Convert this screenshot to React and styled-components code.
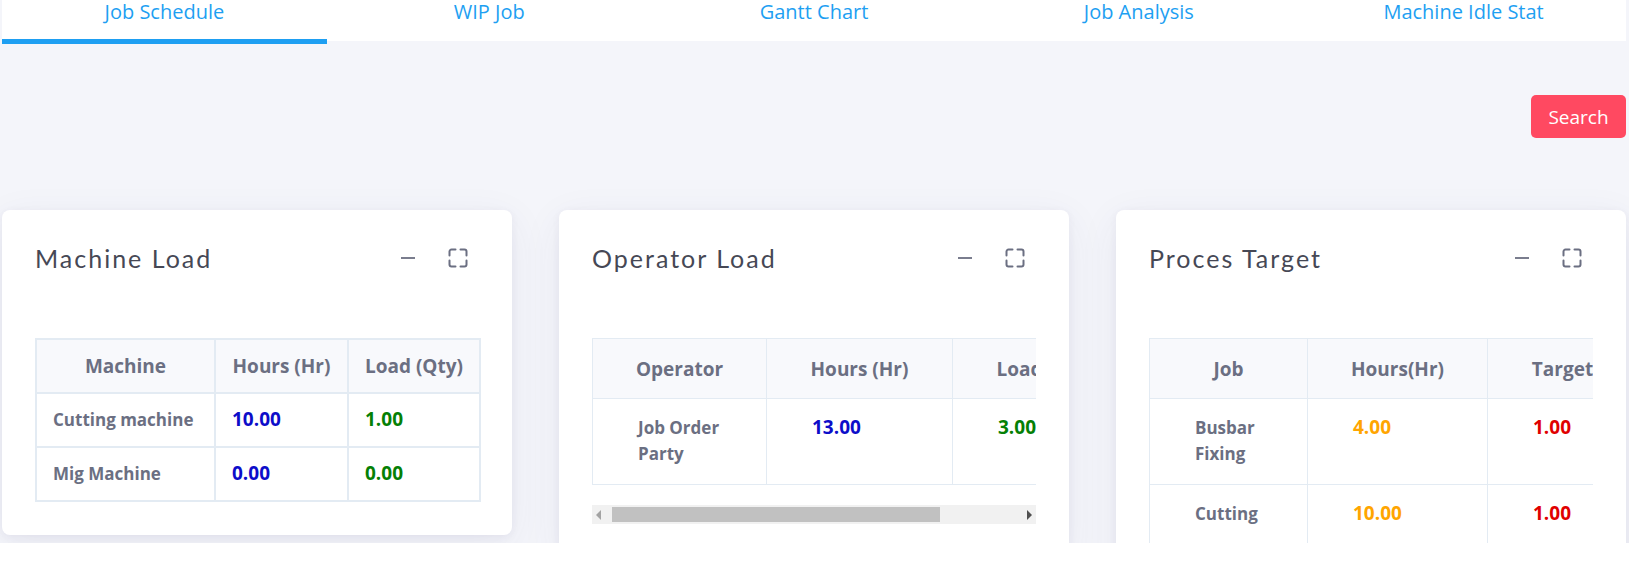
import React from 'react';
import styled, { createGlobalStyle, css } from 'styled-components';

const GlobalStyle = createGlobalStyle`
  html, body {
    margin: 0;
    padding: 0;
    background: #ffffff;
  }
  body {
    font-family: "Open Sans", "Liberation Sans", sans-serif;
    color: #6b6f82;
  }
  * {
    box-sizing: border-box;
  }
`;

const Page = styled.div`
  height: 543px;
  overflow: hidden;
  background: #f4f5fa;
  padding: 0 3px 0 2px;
`;

const TabBar = styled.nav`
  display: flex;
  height: 41px;
  background: #ffffff;
`;

const Tab = styled.div`
  flex: 1;
  position: relative;
  text-align: center;
  font-size: 20px;
  line-height: 24px;
  color: #1e9ff2;
  cursor: pointer;

  ${p =>
    p.$active &&
    css`
      &::after {
        content: '';
        position: absolute;
        left: 0;
        right: 0;
        bottom: -3px;
        height: 5px;
        background: #1e9ff2;
      }
    `}
`;

const Toolbar = styled.div`
  display: flex;
  justify-content: flex-end;
  margin-top: 54px;
`;

const SearchButton = styled.button`
  width: 95px;
  height: 43px;
  border: 0;
  border-radius: 5px;
  background: #ff4961;
  color: #ffffff;
  font-family: "Open Sans", "Liberation Sans", sans-serif;
  font-size: 19px;
  cursor: pointer;
`;

const CardGrid = styled.div`
  display: grid;
  grid-template-columns: repeat(3, minmax(0, 1fr));
  column-gap: 47px;
  margin-top: 72px;
  align-items: start;
`;

const Card = styled.section`
  min-width: 0;
  background: #ffffff;
  border-radius: 8px;
  padding: 33px;
  box-shadow: 0 10px 40px 0 rgba(62, 57, 107, 0.07),
    0 2px 9px 0 rgba(62, 57, 107, 0.06);
`;

const CardHeader = styled.div`
  display: flex;
  align-items: center;
  justify-content: space-between;
  height: 30px;
`;

const CardTitle = styled.h4`
  margin: 0;
  font-family: Lato, "Open Sans", sans-serif;
  font-weight: 400;
  font-size: 25px;
  letter-spacing: 2px;
  color: #464855;
`;

const HeaderActions = styled.div`
  display: flex;
  gap: 26px;
  margin-right: 9px;
`;

const IconButton = styled.span`
  display: flex;
  width: 24px;
  height: 24px;
  color: #6b6f82;
  cursor: pointer;
`;

const CardBody = styled.div`
  margin-top: 65px;
`;

const TableScroll = styled.div`
  overflow: hidden;
`;

const Table = styled.table`
  border-collapse: collapse;
  table-layout: fixed;
  width: ${p => p.$width || '100%'};

  th,
  td {
    border: ${p => (p.$thick ? 2 : 1)}px solid #e3ebf3;
  }

  th {
    background: #f8f9fc;
    font-size: 19px;
    font-weight: 700;
    color: #6b6f82;
    text-align: center;
    height: ${p => (p.$compact ? 54 : 60)}px;
    padding: 0;
    white-space: nowrap;
    overflow: hidden;
  }

  td {
    line-height: 25px;
    vertical-align: ${p => (p.$compact ? 'middle' : 'top')};
    padding: ${p => (p.$compact ? '0 16px' : '16px 40px 17px 45px')};
    height: ${p => (p.$compact ? '54px' : 'auto')};
  }
`;

const NameText = styled.span`
  font-size: 17px;
  font-weight: 700;
  color: #6b6f82;
`;

const tones = {
  blue: '#0d0dc9',
  green: '#058005',
  orange: '#ffa500',
  red: '#e00000',
};

const Value = styled.span`
  font-size: 19px;
  font-weight: 700;
  color: ${p => tones[p.$tone]};
`;

const ScrollTrack = styled.div`
  display: flex;
  align-items: center;
  height: 19px;
  margin-top: 20px;
  background: #f1f1f1;
  padding: 0 4px;
`;

const ScrollArrow = styled.span`
  width: 0;
  height: 0;
  border-top: 5px solid transparent;
  border-bottom: 5px solid transparent;
  ${p =>
    p.$dir === 'left'
      ? css`
          border-right: 5px solid #a3a3a3;
        `
      : css`
          border-left: 5px solid #505050;
        `}
`;

const ScrollThumb = styled.span`
  height: 15px;
  width: 328px;
  margin-left: 11px;
  background: #c1c1c1;
`;

const Spacer = styled.span`
  flex: 1;
`;

const MinusIcon = () => (
  <svg width="24" height="24" viewBox="0 0 24 24" fill="none">
    <path d="M5 12h14" stroke="currentColor" strokeWidth="1.8" />
  </svg>
);

const ExpandIcon = () => (
  <svg width="24" height="24" viewBox="0 0 24 24" fill="none">
    <path
      d="M3.5 9.5V5.5a2 2 0 0 1 2-2h4 M14.5 3.5h4a2 2 0 0 1 2 2v4 M20.5 14.5v4a2 2 0 0 1-2 2h-4 M9.5 20.5h-4a2 2 0 0 1-2-2v-4"
      stroke="currentColor"
      strokeWidth="2"
      strokeLinecap="round"
    />
  </svg>
);

const Panel = ({ title, children }) => (
  <Card>
    <CardHeader>
      <CardTitle>{title}</CardTitle>
      <HeaderActions>
        <IconButton>
          <MinusIcon />
        </IconButton>
        <IconButton>
          <ExpandIcon />
        </IconButton>
      </HeaderActions>
    </CardHeader>
    <CardBody>{children}</CardBody>
  </Card>
);

const ScrollBar = () => (
  <ScrollTrack>
    <ScrollArrow $dir="left" />
    <ScrollThumb />
    <Spacer />
    <ScrollArrow $dir="right" />
  </ScrollTrack>
);

const tabs = ['Job Schedule', 'WIP Job', 'Gantt Chart', 'Job Analysis', 'Machine Idle Stat'];

const machineRows = [
  { name: 'Cutting machine', hours: '10.00', load: '1.00' },
  { name: 'Mig Machine', hours: '0.00', load: '0.00' },
];

const processRows = [
  { name: 'Busbar Fixing', hours: '4.00', target: '1.00' },
  { name: 'Cutting', hours: '10.00', target: '1.00' },
];

export default function App() {
  return (
    <>
      <GlobalStyle />
      <Page>
        <TabBar>
          {tabs.map((t, i) => (
            <Tab key={t} $active={i === 0}>
              {t}
            </Tab>
          ))}
        </TabBar>

        <Toolbar>
          <SearchButton>Search</SearchButton>
        </Toolbar>

        <CardGrid>
          <Panel title="Machine Load">
            <Table $thick $compact>
              <colgroup>
                <col style={{ width: 179 }} />
                <col style={{ width: 133 }} />
                <col style={{ width: 132 }} />
              </colgroup>
              <thead>
                <tr>
                  <th>Machine</th>
                  <th>Hours (Hr)</th>
                  <th>Load (Qty)</th>
                </tr>
              </thead>
              <tbody>
                {machineRows.map(r => (
                  <tr key={r.name}>
                    <td>
                      <NameText>{r.name}</NameText>
                    </td>
                    <td>
                      <Value $tone="blue">{r.hours}</Value>
                    </td>
                    <td>
                      <Value $tone="green">{r.load}</Value>
                    </td>
                  </tr>
                ))}
              </tbody>
            </Table>
          </Panel>

          <Panel title="Operator Load">
            <TableScroll>
              <Table $width="546px">
                <colgroup>
                  <col style={{ width: 174 }} />
                  <col style={{ width: 186 }} />
                  <col style={{ width: 186 }} />
                </colgroup>
                <thead>
                  <tr>
                    <th>Operator</th>
                    <th>Hours (Hr)</th>
                    <th>Load (Qty)</th>
                  </tr>
                </thead>
                <tbody>
                  <tr>
                    <td>
                      <NameText>Job Order Party</NameText>
                    </td>
                    <td>
                      <Value $tone="blue">13.00</Value>
                    </td>
                    <td>
                      <Value $tone="green">3.00</Value>
                    </td>
                  </tr>
                </tbody>
              </Table>
            </TableScroll>
            <ScrollBar />
          </Panel>

          <Panel title="Proces Target">
            <TableScroll>
              <Table $width="488px">
                <colgroup>
                  <col style={{ width: 158 }} />
                  <col style={{ width: 180 }} />
                  <col style={{ width: 150 }} />
                </colgroup>
                <thead>
                  <tr>
                    <th>Job</th>
                    <th>Hours(Hr)</th>
                    <th>Target</th>
                  </tr>
                </thead>
                <tbody>
                  {processRows.map(r => (
                    <tr key={r.name}>
                      <td>
                        <NameText>{r.name}</NameText>
                      </td>
                      <td>
                        <Value $tone="orange">{r.hours}</Value>
                      </td>
                      <td>
                        <Value $tone="red">{r.target}</Value>
                      </td>
                    </tr>
                  ))}
                </tbody>
              </Table>
            </TableScroll>
            <ScrollBar />
          </Panel>
        </CardGrid>
      </Page>
    </>
  );
}
